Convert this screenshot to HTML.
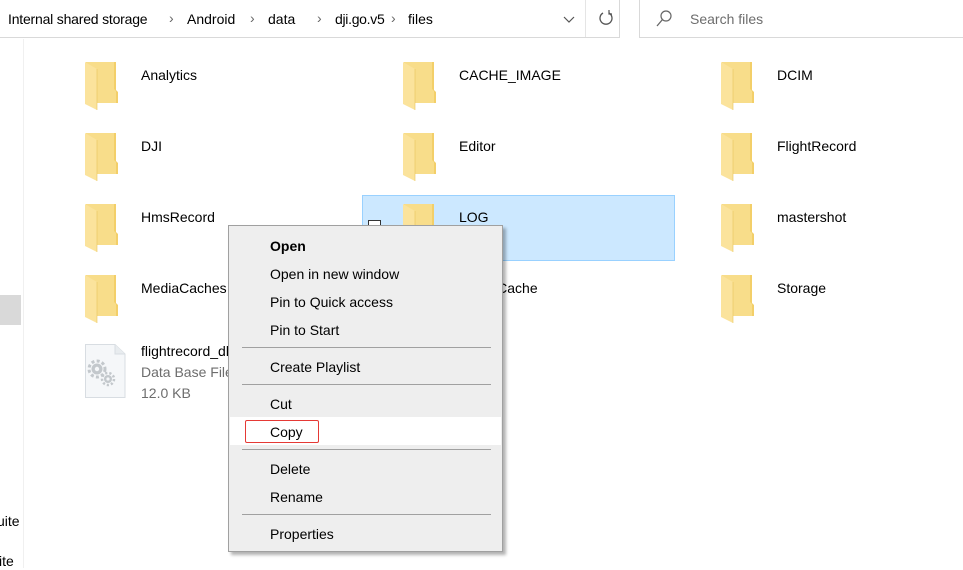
<!DOCTYPE html>
<html><head><meta charset="utf-8"><style>
*{margin:0;padding:0;box-sizing:border-box}
body{width:963px;height:568px;background:#fff;position:relative;overflow:hidden;font-family:"Liberation Sans",sans-serif;font-size:14px;color:#000}
.abs{position:absolute}
.t{position:absolute;font-size:14px;white-space:nowrap;line-height:18px}
.mi{position:absolute;left:270px;font-size:14px;line-height:18px;color:#000}
.sep{position:absolute;left:242px;width:249px;height:1px;background:#a0a0a0}
</style></head><body>
<div class="abs" style="left:0;top:0;width:620px;height:38px;border-bottom:1px solid #d9d9d9;border-right:1px solid #d9d9d9"></div>
<div class="abs" style="left:585px;top:0;width:1px;height:37px;background:#e5e5e5"></div>
<div class="abs" style="left:639px;top:0;width:324px;height:38px;border-bottom:1px solid #d9d9d9;border-left:1px solid #d9d9d9"></div>
<div class="t" style="left:8px;top:10px;color:#000;letter-spacing:-0.2px">Internal shared storage</div>
<div class="t" style="left:169px;top:9px;color:#666">›</div>
<div class="t" style="left:187px;top:10px">Android</div>
<div class="t" style="left:250px;top:9px;color:#666">›</div>
<div class="t" style="left:268px;top:10px">data</div>
<div class="t" style="left:317px;top:9px;color:#666">›</div>
<div class="t" style="left:335px;top:10px;letter-spacing:-0.3px">dji.go.v5</div>
<div class="t" style="left:391px;top:9px;color:#666">›</div>
<div class="t" style="left:408px;top:10px">files</div>
<svg class="abs" style="left:563px;top:14px" width="12" height="10"><path d="M1 3 L6 8 L11 3" stroke="#555" fill="none" stroke-width="1.2"/></svg>
<svg class="abs" style="left:597px;top:9px" width="18" height="20"><path d="M6 4 A6 6 0 1 0 12 4" stroke="#555" fill="none" stroke-width="1.3"/><path d="M12 1 L12 5 L15 5" stroke="#555" fill="none" stroke-width="1.2"/></svg>
<svg class="abs" style="left:655px;top:9px" width="18" height="20"><circle cx="11" cy="7" r="5" stroke="#666" fill="none" stroke-width="1.2"/><path d="M7.5 10.5 L2 17" stroke="#666" stroke-width="1.3"/></svg>
<div class="t" style="left:690px;top:10px;color:#6d6d6d">Search files</div>
<div class="abs" style="left:23px;top:39px;width:1px;height:529px;background:#f0f0f0"></div>
<div class="abs" style="left:0;top:295px;width:21px;height:30px;background:#d9d9d9"></div>
<div class="t" style="left:-3px;top:512px">uite</div>
<div class="t" style="left:-1px;top:552px">ite</div>
<div class="abs" style="left:362px;top:195px;width:313px;height:66px;background:#cce8ff;border:1px solid #99d1ff"></div>
<div class="abs" style="left:368px;top:220px;width:13px;height:13px;border:1px solid #333;background:#fff"></div>

<svg width="0" height="0" style="position:absolute"><defs>
<g id="fd">
<path d="M1 2 H31 V30 L33 32 V43 H1 Z" fill="#f3cf69"/>
<path d="M1 2 H29 V29 L31 31 V43 H12 Z" fill="#f8dd8a"/>
<path d="M0 2 L12 9 V50 L0 44 Z" fill="#fbe39c"/>
<path d="M12 9 V50" stroke="#e8c35a" stroke-width="0.6"/>
</g></defs></svg>

<svg class="abs" style="left:85px;top:60px" width="36" height="52"><use href="#fd"/></svg>
<svg class="abs" style="left:403px;top:60px" width="36" height="52"><use href="#fd"/></svg>
<svg class="abs" style="left:721px;top:60px" width="36" height="52"><use href="#fd"/></svg>
<svg class="abs" style="left:85px;top:131px" width="36" height="52"><use href="#fd"/></svg>
<svg class="abs" style="left:403px;top:131px" width="36" height="52"><use href="#fd"/></svg>
<svg class="abs" style="left:721px;top:131px" width="36" height="52"><use href="#fd"/></svg>
<svg class="abs" style="left:85px;top:202px" width="36" height="52"><use href="#fd"/></svg>
<svg class="abs" style="left:403px;top:202px" width="36" height="52"><use href="#fd"/></svg>
<svg class="abs" style="left:721px;top:202px" width="36" height="52"><use href="#fd"/></svg>
<svg class="abs" style="left:85px;top:273px" width="36" height="52"><use href="#fd"/></svg>
<svg class="abs" style="left:403px;top:273px" width="36" height="52"><use href="#fd"/></svg>
<svg class="abs" style="left:721px;top:273px" width="36" height="52"><use href="#fd"/></svg>
<svg class="abs" style="left:85px;top:344px" width="42" height="56"><path d="M0.5 0.5 H30 L40 10 V53.5 H0.5 Z" fill="#f5f7f9" stroke="#d8dde2"/><path d="M30 0.5 V10 H40" fill="#e8ecef" stroke="#d8dde2"/><circle cx="12" cy="25" r="5.5" fill="#c3c8cc"/><circle cx="12" cy="25" r="8" fill="none" stroke="#c3c8cc" stroke-width="3" stroke-dasharray="3 2.3"/><circle cx="12" cy="25" r="2.2" fill="#f5f7f9"/><circle cx="23" cy="35" r="4" fill="#c3c8cc"/><circle cx="23" cy="35" r="6" fill="none" stroke="#c3c8cc" stroke-width="2.5" stroke-dasharray="2.2 2"/><circle cx="23" cy="35" r="1.6" fill="#f5f7f9"/></svg>

<div class="t" style="left:141px;top:66px">Analytics</div>
<div class="t" style="left:459px;top:66px">CACHE_IMAGE</div>
<div class="t" style="left:777px;top:66px">DCIM</div>
<div class="t" style="left:141px;top:137px">DJI</div>
<div class="t" style="left:459px;top:137px">Editor</div>
<div class="t" style="left:777px;top:137px">FlightRecord</div>
<div class="t" style="left:141px;top:208px">HmsRecord</div>
<div class="t" style="left:459px;top:208px">LOG</div>
<div class="t" style="left:777px;top:208px">mastershot</div>
<div class="t" style="left:141px;top:279px">MediaCaches</div>
<div class="t" style="left:459px;top:279px">MediaCache</div>
<div class="t" style="left:777px;top:279px">Storage</div>
<div class="t" style="left:141px;top:342px">flightrecord_db</div>
<div class="t" style="left:141px;top:363px;color:#6d6d6d">Data Base File</div>
<div class="t" style="left:141px;top:384px;color:#6d6d6d">12.0 KB</div>

<div class="abs" style="left:228px;top:225px;width:275px;height:327px;background:#eeeeee;border:1px solid #a0a0a0;box-shadow:3px 3px 3px rgba(0,0,0,0.3)"></div>
<div class="abs" style="left:230px;top:417px;width:271px;height:28px;background:#fff"></div>
<div class="abs" style="left:245px;top:420px;width:74px;height:23px;border:1.5px solid #e53935;border-radius:2px"></div>
<div class="mi" style="top:237px;font-weight:bold">Open</div>
<div class="mi" style="top:265px">Open in new window</div>
<div class="mi" style="top:293px">Pin to Quick access</div>
<div class="mi" style="top:321px">Pin to Start</div>
<div class="sep" style="top:347px"></div>
<div class="mi" style="top:358px">Create Playlist</div>
<div class="sep" style="top:384px"></div>
<div class="mi" style="top:395px">Cut</div>
<div class="mi" style="top:423px">Copy</div>
<div class="sep" style="top:449px"></div>
<div class="mi" style="top:460px">Delete</div>
<div class="mi" style="top:488px">Rename</div>
<div class="sep" style="top:514px"></div>
<div class="mi" style="top:525px">Properties</div>
</body></html>
